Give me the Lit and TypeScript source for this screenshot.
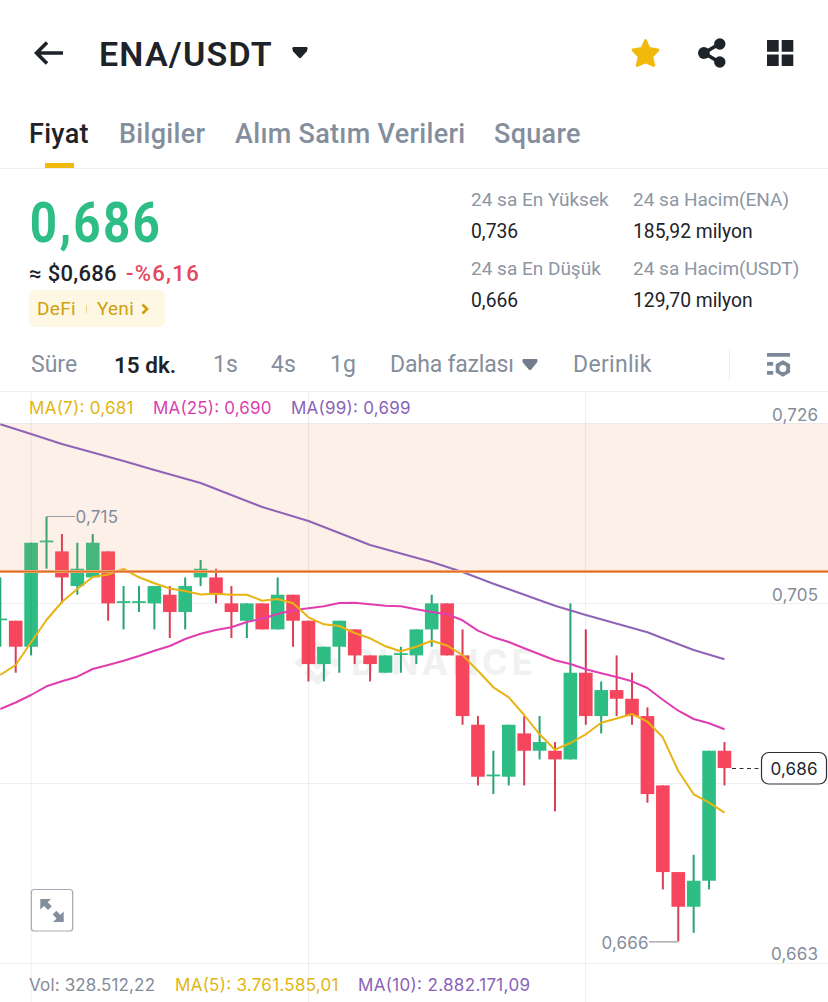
import { LitElement, html, svg, css } from "lit";
import { customElement, property } from "lit/decorators.js";

// Candle: [isUp, high, bodyTop, bodyBottom, low], in 0.001 price ticks below the 0,705 grid line.
type Candle = [number, number, number, number, number];
const CANDLES: Candle[] = [
  [1, -3, 2, 2, 5], [0, 2, 2, 5, 8], [1, -7, -7, 5, 6], [1, -10, -7, -7, -4],
  [0, -8, -6, -3, 0], [1, -7, -4, -2, -1], [1, -8, -7, -3, -3], [0, -6, -6, 0, 2],
  [1, -2, 0, 0, 3], [1, -2, 0, 0, 1], [1, -2, -2, 0, 3], [0, -2, -1, 1, 4],
  [1, -3, -2, 1, 3], [1, -5, -4, -3, -2], [0, -4, -3, -1, 0], [0, -2, 0, 1, 4],
  [1, 0, 0, 2, 4], [0, 0, 0, 3, 3], [1, -3, -1, 3, 3], [0, -1, -1, 2, 5],
  [0, 2, 2, 7, 9], [1, 5, 5, 7, 9], [1, 2, 2, 5, 8], [0, 3, 3, 6, 7],
  [0, 6, 6, 7, 9], [1, 6, 6, 8, 8], [1, 5, 6, 6, 8], [1, 3, 3, 6, 7],
  [1, -1, 0, 3, 5], [0, 0, 0, 6, 6], [0, 3, 6, 13, 14], [0, 13, 14, 20, 21],
  [1, 17, 20, 20, 22], [1, 14, 14, 20, 21], [0, 13, 15, 17, 21], [1, 13, 16, 17, 18],
  [0, 16, 17, 18, 24], [1, 0, 8, 18, 18], [0, 3, 8, 13, 14], [1, 9, 10, 13, 15],
  [0, 6, 10, 11, 13], [0, 8, 11, 13, 14], [0, 12, 13, 22, 23], [0, 21, 21, 31, 33],
  [0, 31, 31, 35, 39], [1, 29, 32, 35, 38], [1, 17, 17, 32, 33], [0, 16, 17, 19, 21],
];
const MA7 = [675, 665, 642.3, 620, 602, 589, 577, 574.5, 569, 577.3, 583.3, 588.5, 591, 594.5, 593.8, 594.7,
  594.7, 600.7, 599, 603.3, 617.3, 624.3, 626, 633, 638.3, 646.3, 651.3, 646.7, 640.7, 645.5, 655, 670.7,
  687.3, 697.3, 715, 734.3, 749.7, 743, 734.3, 722.7, 718.5, 714, 721.7, 737.3, 771, 794.3, 802.7, 812.7];
const MA25 = [709, 702.5, 695, 686.3, 681.3, 676.7, 669, 665, 660.7, 656, 650.7, 646, 639, 633.7, 630, 627.3,
  622, 618.7, 614, 610.3, 608.3, 606.3, 603, 602.7, 604.3, 605.7, 606.3, 609.3, 612, 614.3, 620.3, 630.7,
  637.3, 642, 648.3, 654.3, 660.3, 664, 669.3, 673.3, 677, 681.3, 688, 699.7, 710.7, 719, 723.3, 729.3];
const MA99: [number, number][] = [[0, 424.3], [2, 434], [4, 444], [8, 461], [10, 470], [13, 483], [17, 507],
  [20, 521], [24, 545], [28, 562], [30, 572], [32, 583.7], [36, 605.7], [38, 615], [42, 632.3], [43, 638.3],
  [45, 650], [47, 659.3]];

const px = (i: number) => 0.3 + i * 15.408;
const py = (k: number) => 603.4 + k * 8.667;
const line = (pts: [number, number][]) => pts.map(([i, y]) => `${px(i).toFixed(1)},${y}`).join(" ");

@customElement("price-chart")
export class PriceChart extends LitElement {
  static styles = css`
    :host { display: block; width: 828px; height: 610px; }
    svg { display: block; }
    text { font-family: Inter, "Liberation Sans", sans-serif; font-size: 17px; fill: #848c99; }
    .up { fill: #2ebd85; }
    .down { fill: #f6465d; }
    .wick-down { fill: #d83f56; }
    .wick-up { fill: #27a374; }
    .grid { stroke: #000; stroke-opacity: 0.06; stroke-width: 1.2; }
    .ma { fill: none; stroke-width: 2; stroke-linejoin: round; }
    .mark { fill: #f0f2f1; }
    .brand { font-size: 35px; font-weight: 700; fill: #f0f2f1; }
    .y { fill: #e3b512; } .p { fill: #d93fae; } .v { fill: #8a63b8; }
    .last { fill: #23272e; }
  `;
  render() {
    return html`<svg width="828" height="610" viewBox="0 392 828 610">
      <path class="mark" d="M317.500 640l13 12.500-5 5-8-7.500-8 7.500-5-5zM317.500 685.500l13-12.500-5-5-8 7.500-8-7.500-5 5zM299.500 657l5.500 5.500-5.500 5.500-5.500-5.500zM335.500 657l5.500 5.500-5.500 5.500-5.500-5.500zM317.500 654.500l8 8-8 8-8-8z" />
      <text class="brand" x="351" y="674.500" textLength="182">BINANCE</text>
      ${[423.5, 603.5, 783.5, 963.5].map((y) => svg`<line class="grid" x1="0" x2="828" y1=${y} y2=${y} />`)}
      ${CANDLES.map(([up, hi, top, bottom, low], i) => {
        const flat = top === bottom;
        const y = flat ? py(top) - 2.2 : py(top);
        const h = flat ? 1.8 : py(bottom) - py(top);
        return svg`
          <rect class=${up ? "wick-up" : "wick-down"} x=${px(i) - 1} y=${py(hi)} width="2" height=${py(low) - py(hi)} />
          <rect class=${up ? "up" : "down"} x=${px(i) - 6.8} y=${y} width="13.6" height=${h} />`;
      })}
      <rect x="0" y="423.500" width="828" height="148" fill="#ef8240" fill-opacity="0.120" />
      ${[31.2, 308.5, 585.5].map((x) => svg`<line class="grid" x1=${x} x2=${x} y1="392" y2="1002" />`)}
      <polyline class="ma" stroke="#8f63b5" points=${line(MA99)} />
      <polyline class="ma" stroke="#df3eb0" points=${line(MA25.map((y, i) => [i, y]))} />
      <polyline class="ma" stroke="#e8b414" points=${line(MA7.map((y, i) => [i, y]))} />
      <rect x="0" y="570" width="828" height="3" fill="#f3a56f" />
      <rect x="0" y="571" width="828" height="1.200" fill="#dc6f2b" />
      <path d="M46.500 516.500H75M649 941.800H678" fill="none" stroke="#9a9da3" stroke-width="1.200" />
      <text x="75.500" y="523.300" textLength="42.500">0,715</text>
      <text x="601.500" y="949" textLength="47">0,666</text>
      <text x="772" y="420.500" textLength="46">0,726</text>
      <text x="772" y="600.500" textLength="46">0,705</text>
      <text x="771" y="960" textLength="47">0,663</text>
      <path d="M732 768.500H760" stroke="#2b2f36" stroke-width="1.200" stroke-dasharray="4 3.500" />
      <rect x="761.500" y="752.500" width="65" height="31.500" rx="7.500" fill="#fff" stroke="#2b2f36" stroke-width="1.200" />
      <text class="last" x="770.500" y="775" textLength="47">0,686</text>
      <text class="y" x="29" y="413.500" textLength="104.500">MA(7): 0,681</text>
      <text class="p" x="153" y="413.500" textLength="118.500">MA(25): 0,690</text>
      <text class="v" x="291" y="413.500" textLength="119.500">MA(99): 0,699</text>
      <text x="29" y="991.300" textLength="126">Vol: 328.512,22</text>
      <text class="y" x="175" y="991.300" textLength="163.500">MA(5): 3.761.585,01</text>
      <text class="v" x="358" y="991.300" textLength="172">MA(10): 2.882.171,09</text>
      <rect x="31.300" y="889.500" width="41.400" height="41.500" rx="3" fill="#fff" stroke="#a3a9b2" stroke-width="1.200" />
      <path d="M40.300 899H51L47.700 902.300 51.800 906.300 48 910 44 905.900 40.300 909.500zM63.700 922V911.500L60.300 914.800 56.300 910.800 52.700 914.500 56.600 918.400 53 922z" fill="#858e9c" />
    </svg>`;
  }
}

@customElement("market-stat")
export class MarketStat extends LitElement {
  static styles = css`
    :host { display: block; white-space: nowrap; }
    .label { color: #8d96a3; line-height: 30px; font-size: 19px; }
    .value { color: #1e2329; line-height: 31px; font-size: 19.3px; padding-top: 1px; margin-bottom: -1px; }
  `;
  @property() label = "";
  @property() value = "";
  render() {
    return html`<div class="label">${this.label}</div><div class="value">${this.value}</div>`;
  }
}

@customElement("app-root")
export class AppRoot extends LitElement {
  static styles = css`
    :host { display: block; width: 828px; height: 1002px; overflow: hidden; background: #fff; color: #1e2329;
      font-family: Roboto, "Liberation Sans", sans-serif; }
    * { box-sizing: border-box; }
    svg { display: block; flex: none; }
    .header { display: flex; align-items: center; height: 106px; padding: 0 34px; }
    .title { margin: 0 20px 0 36px; width: 173px; font-size: 34px; font-weight: 600; line-height: 40px; letter-spacing: 1.2px; white-space: nowrap; padding-top: 2px; }
    .actions { display: flex; align-items: center; gap: 40px; margin-left: auto; }
    .share { margin-left: -2px; }
    .tabs { display: grid; grid-template-columns: 90px 116px 259px 1fr; height: 63px; padding: 11px 0 0 29px;
      border-bottom: 1px solid #f0f1f2; font-size: 27px; font-weight: 500; color: #848e9c; white-space: nowrap; letter-spacing: 0.3px; }
    .tab { line-height: 35px; }
    .active { color: #1e2329; display: flex; flex-direction: column; justify-content: space-between; width: 61px; }
    .bar { width: 29px; height: 5px; margin-left: 16px; background: #f0b90b; }
    .info { display: grid; grid-template-columns: 442px 162px 1fr; padding: 16px 0 0 29px; height: 177px; }
    .price { font-size: 55px; font-weight: 700; color: #2ebd85; line-height: 76px; height: 75px; letter-spacing: 2.6px;
      transform: scaleX(0.865); transform-origin: 0 50%; padding-left: 1px; }
    .sub { display: flex; gap: 9px; font-size: 22px; font-weight: 500; line-height: 27px; height: 30px; white-space: nowrap; letter-spacing: 0.3px; }
    .drop { color: #e24760; letter-spacing: 1.35px; }
    .tags { display: inline-flex; align-items: center; width: 136px; height: 37px; border-radius: 6px; padding-left: 8px;
      background: #fdf7e4; color: #cf9f0d; font-size: 19px; letter-spacing: 0.3px; }
    .sep { width: 1px; height: 8px; background: #ecd48b; margin: 0 10px; }
    .stats { display: flex; flex-direction: column; gap: 8px; }
    .periods { display: grid; grid-template-columns: 84px 98px 58px 59px 60px 183px 156px 37px 1fr; align-items: center;
      height: 46px; padding-left: 31px; padding-bottom: 8px; border-bottom: 1px solid #eeeff1; font-size: 23px; color: #848e9c; white-space: nowrap; }
    .on { color: #1e2329; font-weight: 600; font-size: 22.5px; margin-left: -1px; }
    .more { display: flex; align-items: center; gap: 8px; letter-spacing: -0.2px; }
    .depth { letter-spacing: 0.3px; }
    .rule { border-left: 1px solid #eceef0; height: 30px; }
  `;
  render() {
    return html`
      <header class="header">
        <svg width="29" height="24" viewBox="0 0 29 24" fill="none" stroke="#1e2329" stroke-width="3.600"><path d="M29 12H3M13 1.500L2.500 12 13 22.500" /></svg>
        <div class="title">ENA/USDT</div>
        <svg width="16" height="12" viewBox="0 0 16 12"><path d="M1.500 0H14.500Q16 0 15.500 2L14.800 4.200 9 10.800Q8 11.700 7 10.800L1 4.200.4 2Q0 0 1.500 0Z" fill="#1e2329" /></svg>
        <div class="actions">
          <svg width="29" height="30" viewBox="0 0 29 30"><path d="M14.500 2.500L18 10.500 27 12 20.800 18.500 22.800 27.500 14.500 24 6.200 27.500 8.200 18.500 2 12 11 10.500Z" fill="#f0b90b" stroke="#f0b90b" stroke-width="2.800" stroke-linejoin="round" /></svg>
          <svg class="share" width="29" height="30" viewBox="0 0 29 30" fill="#1e2329"><path d="M22 5.500L6 15 22 24.500" fill="none" stroke="#1e2329" stroke-width="3.600" /><circle cx="21.800" cy="6" r="5.700" /><circle cx="5.900" cy="15" r="5.900" /><circle cx="21.800" cy="24" r="5.700" /></svg>
          <svg width="27" height="26" viewBox="0 0 27 26" fill="#1e2329"><path d="M0 0h11.700v11.700H0zM14.700 0h11.600v11.700H14.700zM0 14.500h11.700v11.500H0zM14.700 14.500h11.600v11.500H14.700z" /></svg>
        </div>
      </header>
      <nav class="tabs">
        <div class="tab active">Fiyat<div class="bar"></div></div>
        <div class="tab">Bilgiler</div>
        <div class="tab">Alım Satım Verileri</div>
        <div class="tab">Square</div>
      </nav>
      <section class="info">
        <div>
          <div class="price">0,686</div>
          <div class="sub"><span>≈ $0,686</span><span class="drop">-%6,16</span></div>
          <div class="tags"><span>DeFi</span><span class="sep"></span><span>Yeni</span>
            <svg width="17" height="12" viewBox="0 0 17 12"><path d="M8.500 1.500L13 6 8.500 10.500" fill="none" stroke="#cf9f0d" stroke-width="2.600" /></svg>
          </div>
        </div>
        <div class="stats">
          <market-stat label="24 sa En Yüksek" value="0,736"></market-stat>
          <market-stat label="24 sa En Düşük" value="0,666"></market-stat>
        </div>
        <div class="stats">
          <market-stat label="24 sa Hacim(ENA)" value="185,92 milyon"></market-stat>
          <market-stat label="24 sa Hacim(USDT)" value="129,70 milyon"></market-stat>
        </div>
      </section>
      <div class="periods">
        <span>Süre</span><span class="on">15 dk.</span><span>1s</span><span>4s</span><span>1g</span>
        <span class="more">Daha fazlası
          <svg width="16" height="12" viewBox="0 0 16 12"><path d="M1.500 0H14.500Q16 0 15.500 2L14.800 3.700 9 10.800Q8 11.700 7 10.800L1 3.700.4 2Q0 0 1.500 0Z" fill="#727c8c" /></svg>
        </span>
        <span class="depth">Derinlik</span><span class="rule"></span>
        <svg width="25" height="24" viewBox="0 0 25 24" fill="#7c8797"><path d="M1 0H24V3.700H1zM1 9H7.200V12.700H1zM1 18H7.200V21.700H1z" /><path fill-rule="evenodd" d="M16.900 7.200L24.100 11.300V19.500L16.900 23.700 9.700 19.500V11.300ZM16.900 12A3.500 3.500 0 1 0 16.900 19 3.500 3.500 0 1 0 16.900 12Z" /></svg>
      </div>
      <price-chart></price-chart>
    `;
  }
}
